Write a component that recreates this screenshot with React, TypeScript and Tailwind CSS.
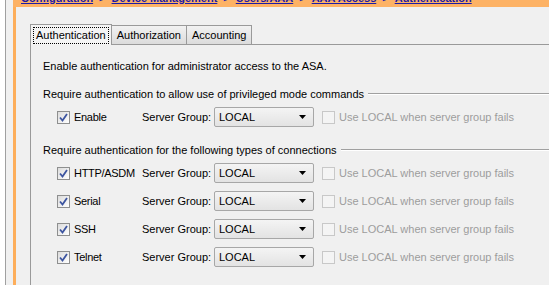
import React from 'react'

const font = { fontFamily: '"Liberation Sans", Arial, sans-serif' }

function CheckBox({ checked, disabled }: { checked?: boolean; disabled?: boolean }) {
  return (
    <div
      className={`w-[13px] h-[13px] shrink-0 border ${
        disabled ? 'border-[#c8c8c8] bg-[#f4f4f4]' : 'border-[#8e8f8f] bg-gradient-to-br from-[#dcdcdc] to-[#ffffff]'
      } flex items-center justify-center`}
    >
      {checked && (
        <svg width="9" height="9" viewBox="0 0 9 9">
          <path d="M1 4.5 L3.5 7.5 L8 1" fill="none" stroke="#3d55a0" strokeWidth="1.8" />
        </svg>
      )}
    </div>
  )
}

function Combo() {
  return (
    <div className="w-[100px] h-[20px] shrink-0 border border-[#a7a7a7] rounded-[2px] bg-gradient-to-b from-[#f4f4f4] to-[#e3e3e3] flex items-center pl-[4px] pr-[7px]">
      <span className="flex-1 text-[11px] text-black">LOCAL</span>
      <svg width="7" height="4" viewBox="0 0 7 4">
        <path d="M0 0 H7 L3.5 4 Z" fill="#000" />
      </svg>
    </div>
  )
}

function Row({ label }: { label: string }) {
  return (
    <div className="flex items-center h-[28px] pl-[14px]">
      <div className="w-[85px] flex items-center gap-[4px]">
        <CheckBox checked />
        <span className="tracking-[-0.3px]">{label}</span>
      </div>
      <span className="w-[72px]">Server Group:</span>
      <Combo />
      <div className="ml-[8px] flex items-center gap-[4px]">
        <CheckBox disabled />
        <span className="text-[#9d9d9d]">Use LOCAL when server group fails</span>
      </div>
    </div>
  )
}

function GroupTitle({ text }: { text: string }) {
  return (
    <div className="flex items-center h-[14px]">
      <span>{text}</span>
      <div className="flex-1 ml-[4px] flex flex-col">
        <div className="h-px bg-[#a0a0a0]" />
        <div className="h-px bg-white" />
      </div>
    </div>
  )
}

export default function App() {
  return (
    <div className="w-[549px] h-[285px] overflow-hidden flex bg-[#f0f0f0] text-[11px] text-black" style={font}>
      <div className="w-[13px] flex shrink-0">
        <div className="w-[5px] bg-white" />
        <div className="w-px bg-[#a0a0a0]" />
        <div className="flex-1 bg-[#f0f0f0]" />
      </div>
      <div className="flex-1 flex flex-col border-l-[3px] border-[#fdae5b]">
        <div className="h-[7px] bg-[#fdb265] overflow-hidden flex items-end -ml-[3px]">
          <div className="flex gap-[6px] text-[11px] font-bold text-[#1b1ba8] leading-[13px] mb-[2px] pl-[8px] whitespace-nowrap">
            <span className="underline">Configuration</span>
            <span>&gt;</span>
            <span className="underline">Device Management</span>
            <span>&gt;</span>
            <span className="underline">Users/AAA</span>
            <span>&gt;</span>
            <span className="underline">AAA Access</span>
            <span>&gt;</span>
            <span className="underline">Authentication</span>
          </div>
        </div>
        <div className="flex-1 flex flex-col pl-[14px] pt-[16px]">
          <div className="flex items-end h-[21px]">
            <div className="h-[21px] px-[2px] pt-[2px] border border-b-0 border-[#9a9a9a] bg-[#f4f4f4] relative top-px z-10">
              <div className="border border-dotted border-black px-[2px] h-[17px] flex items-center">Authentication</div>
            </div>
            <div className="h-[19px] px-[5px] flex items-center border border-l-0 border-b-0 border-[#9a9a9a] bg-gradient-to-b from-[#f2f2f2] to-[#dcdcdc]">
              Authorization
            </div>
            <div className="h-[19px] px-[5px] flex items-center border border-l-0 border-b-0 border-[#9a9a9a] bg-gradient-to-b from-[#f2f2f2] to-[#dcdcdc]">
              Accounting
            </div>
          </div>
          <div className="flex-1 border-t border-l border-[#9a9a9a] bg-[#f0f0f0] pl-[12px] pt-[14px]">
            <div className="h-[14px] flex items-center">Enable authentication for administrator access to the ASA.</div>
            <div className="mt-[14px]">
              <GroupTitle text="Require authentication to allow use of privileged mode commands" />
            </div>
            <div className="mt-[2px]">
              <Row label="Enable" />
            </div>
            <div className="mt-[12px]">
              <GroupTitle text="Require authentication for the following types of connections" />
            </div>
            <div className="mt-[2px]">
              <Row label="HTTP/ASDM" />
              <Row label="Serial" />
              <Row label="SSH" />
              <Row label="Telnet" />
            </div>
          </div>
        </div>
      </div>
    </div>
  )
}
